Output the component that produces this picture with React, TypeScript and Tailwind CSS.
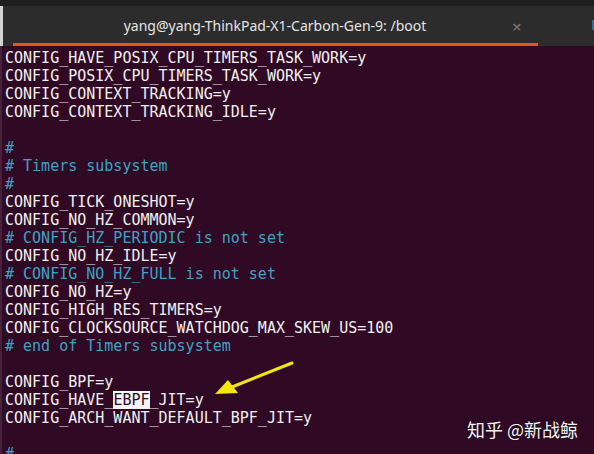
import React from "react";

type Line = { t: string; c?: boolean; hl?: boolean };

const lines: Line[] = [
  { t: "CONFIG_HAVE_POSIX_CPU_TIMERS_TASK_WORK=y" },
  { t: "CONFIG_POSIX_CPU_TIMERS_TASK_WORK=y" },
  { t: "CONFIG_CONTEXT_TRACKING=y" },
  { t: "CONFIG_CONTEXT_TRACKING_IDLE=y" },
  { t: "" },
  { t: "#", c: true },
  { t: "# Timers subsystem", c: true },
  { t: "#", c: true },
  { t: "CONFIG_TICK_ONESHOT=y" },
  { t: "CONFIG_NO_HZ_COMMON=y" },
  { t: "# CONFIG_HZ_PERIODIC is not set", c: true },
  { t: "CONFIG_NO_HZ_IDLE=y" },
  { t: "# CONFIG_NO_HZ_FULL is not set", c: true },
  { t: "CONFIG_NO_HZ=y" },
  { t: "CONFIG_HIGH_RES_TIMERS=y" },
  { t: "CONFIG_CLOCKSOURCE_WATCHDOG_MAX_SKEW_US=100" },
  { t: "# end of Timers subsystem", c: true },
  { t: "" },
  { t: "CONFIG_BPF=y" },
  { t: "CONFIG_HAVE_EBPF_JIT=y", hl: true },
  { t: "CONFIG_ARCH_WANT_DEFAULT_BPF_JIT=y" },
  { t: "" },
  { t: "#", c: true },
];

export default function App() {
  return (
    <div className="relative w-[594px] h-[454px] overflow-hidden bg-[#300a24] flex flex-col">
      <div className="h-[6px] bg-[#1e1e1e] shrink-0" />
      <div className="relative h-[40px] shrink-0 bg-[#2c2c2c] flex flex-col border-l-[3px] border-[#d4d4d4]">
        <div className="flex-1 flex items-center relative">
          <div
            className="w-[544px] text-center text-[14px] text-[#e4e4e4] pt-[2px]"
            style={{ fontFamily: '"Noto Sans", "Open Sans", sans-serif' }}
          >
            yang@yang-ThinkPad-X1-Carbon-Gen-9: /boot
          </div>
          <div className="absolute left-[509px] top-[12px] text-[17px] text-[#7a7a7a] leading-none">×</div>
          <div className="absolute right-[0px] top-[14px] w-[2px] h-[10px] bg-[#3a6a8a]" />
        </div>
        <div className="h-[3px] ml-[10px] w-[525px] bg-[#e95420]" />
      </div>
      <div
        className="flex-1 pt-[3px] pl-[3px] border-l-[2px] border-[#43223a] text-[15px] leading-[18px] text-[#f0f0f0] whitespace-pre"
        style={{ fontFamily: '"DejaVu Sans Mono", "Liberation Mono", monospace' }}
      >
        {lines.map((l, i) => (
          <div key={i} className={`h-[18px] ${l.c ? "text-[#3ea2c4]" : ""}`}>
            {l.hl ? (
              <>
                CONFIG_HAVE_<span className="bg-[#f4f4f4] text-[#300a24]">EBPF</span>_JIT=y
              </>
            ) : (
              l.t || "\u00a0"
            )}
          </div>
        ))}
      </div>
      <svg className="absolute left-0 top-0 pointer-events-none" width="594" height="454">
        <line x1="292" y1="363" x2="232" y2="387" stroke="#f2e60c" strokeWidth="3" strokeLinecap="round" />
        <polygon points="215,394 228,380 238,393" fill="#f2e60c" />
      </svg>
      <div
        className="absolute left-[467px] top-[417px] text-[18px] text-[#f4f4f4] leading-[24px]"
        style={{ fontFamily: '"Noto Sans CJK SC", "Noto Sans", sans-serif', textShadow: "0 0 2px rgba(0,0,0,0.6)" }}
      >
        知乎 @新战鲸
      </div>
    </div>
  );
}
